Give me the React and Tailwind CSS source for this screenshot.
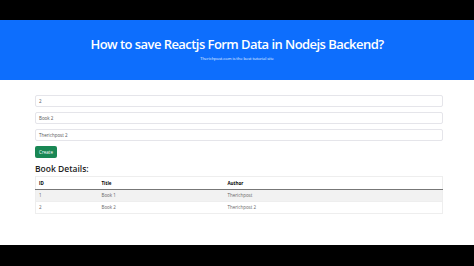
export default function App() {
  const books = [
    { id: 1, title: 'Book 1', author: 'Therichpost' },
    { id: 2, title: 'Book 2', author: 'Therichpost 2' },
  ];

  return (
    <div className="w-[474px] h-[266px] bg-black flex flex-col overflow-hidden" style={{ fontFamily: '"Open Sans", "Noto Sans", sans-serif' }}>
      <div className="h-[20px] shrink-0" />
      {/* Header */}
      <div className="h-[60px] bg-[#0d6efd] text-white flex flex-col items-center pt-[17px]">
        <h1 className="text-[13px] leading-[14px] font-semibold tracking-[-0.55px]">How to save Reactjs Form Data in Nodejs Backend?</h1>
        <p className="text-[4px] leading-[5px] mt-[5px] text-white/90">Therichpost.com is the best tutorial site</p>
      </div>

      <div className="h-[165px] bg-white px-[35px] pt-[15px]">
        <div className="flex flex-col gap-[5px] w-[408px]">
          {['2', 'Book 2', 'Therichpost 2'].map((v) => (
            <div key={v} className="h-[12px] border border-[#e5e5ea] rounded-[2px] px-[3px] flex items-center text-[4.5px] text-[#555]">
              {v}
            </div>
          ))}
        </div>
        <button className="mt-[5px] h-[12px] w-[22px] bg-[#198754] text-white rounded-[2px] text-[4.5px] flex items-center justify-center">
          Create
        </button>
        <h3 className="text-[8.5px] leading-[10px] font-semibold text-[#222] mt-[6px]">Book Details:</h3>
        <table className="mt-[2px] w-[408px] text-[4.5px] border border-[#eee] border-collapse">
          <thead>
            <tr className="h-[13px] border-b-[1.5px] border-[#777]">
              <th className="text-left font-bold pl-[3px] w-[66px]">ID</th>
              <th className="text-left font-bold w-[126px]">Title</th>
              <th className="text-left font-bold">Author</th>
            </tr>
          </thead>
          <tbody className="text-[#666]">
            {books.map((b, i) => (
              <tr key={b.id} className={`h-[12px] border-b border-[#eee] ${i % 2 === 0 ? 'bg-[#f2f2f2]' : 'bg-white'}`}>
                <td className="pl-[3px]">{b.id}</td>
                <td>{b.title}</td>
                <td>{b.author}</td>
              </tr>
            ))}
          </tbody>
        </table>
      </div>
      <div className="flex-1" />
    </div>
  );
}
